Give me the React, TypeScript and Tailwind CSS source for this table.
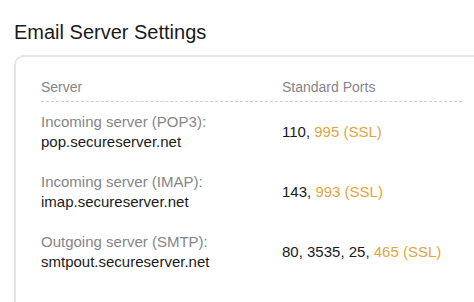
import React from 'react';

const servers = [
  { label: 'Incoming server (POP3):', host: 'pop.secureserver.net', plain: '110, ', ssl: '995 (SSL)' },
  { label: 'Incoming server (IMAP):', host: 'imap.secureserver.net', plain: '143, ', ssl: '993 (SSL)' },
  { label: 'Outgoing server (SMTP):', host: 'smtpout.secureserver.net', plain: '80, 3535, 25, ', ssl: '465 (SSL)' },
];

export default function App() {
  return (
    <div
      className="w-[474px] h-[302px] overflow-hidden bg-white pl-[14px] pt-[20px]"
      style={{ fontFamily: '"Liberation Sans", Arial, sans-serif' }}
    >
      <h1 className="text-[20px] leading-[24px] text-[#1a1a1a]">Email Server Settings</h1>
      <div className="mt-[11px] w-[480px] h-[260px] rounded-[10px] border-2 border-[#e6e6e6] pl-[25px] pt-[20px]">
        <div className="w-[421px] flex text-[14px] leading-[20px] text-[#858585] pb-[4px] border-b border-dashed border-[#d0d0d0]">
          <div className="w-[241px]">Server</div>
          <div>Standard Ports</div>
        </div>
        <div className="flex flex-col gap-[20px] pt-[10px]">
          {servers.map((s) => (
            <div key={s.host} className="flex items-center text-[15px] leading-[20px]">
              <div className="w-[241px]">
                <div className="text-[#858585]">{s.label}</div>
                <div className="text-[#1a1a1a]">{s.host}</div>
              </div>
              <div className="text-[#1a1a1a]">
                {s.plain}
                <span className="text-[#dfa63f]">{s.ssl}</span>
              </div>
            </div>
          ))}
        </div>
      </div>
    </div>
  );
}
